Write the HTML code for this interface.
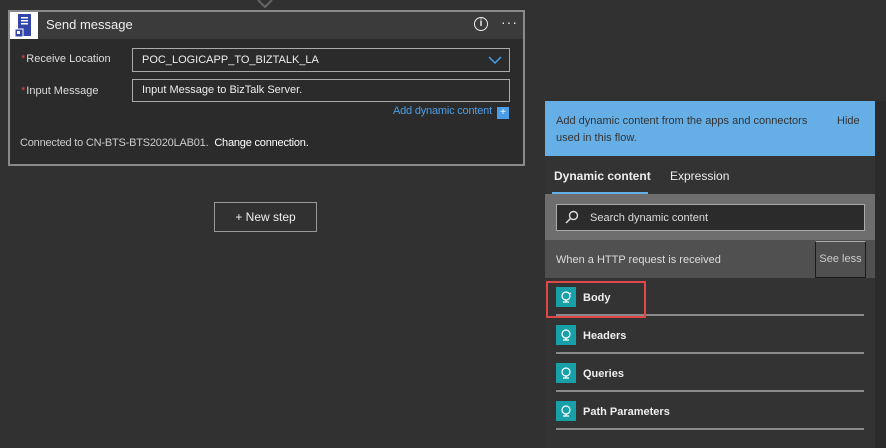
<!DOCTYPE html>
<html><head><style>
*{margin:0;padding:0;box-sizing:border-box}
body{width:886px;height:448px;background:#313131;font-family:"Liberation Sans",sans-serif;position:relative;overflow:hidden;color:#ddd}
.a{position:absolute}
.card{left:8px;top:10px;width:517px;height:156px;border:2px solid #8a8a8a;background:#2b2b2b}
.hdr{left:0;top:0;width:513px;height:27px;background:#3b3b3b}
.lbl{font-size:11px;color:#ddd}
.lbl b{color:#e04040;font-weight:normal;margin-right:1px}
.inp{border:1px solid #aaa;background:#2b2b2b;font-size:11px;color:#eee;padding-left:9px}
.item{left:556px;width:308px;height:38px;border-bottom:2px solid #8a8a8a}
.ic{position:absolute;left:0;top:9px;width:20px;height:20px;background:#17a0a8}
.it{position:absolute;left:27px;top:14px;font-size:11px;font-weight:bold;color:#eee}
</style></head><body>
<svg class="a" style="left:256px;top:0" width="18" height="10"><path d="M2 0 L9 7 L16 0" stroke="#666" stroke-width="2" fill="none"/></svg>
<div class="a card">
 <div class="a hdr"></div>
 <div class="a" style="left:0;top:0;width:28px;height:27px;background:#fff"></div>
 <svg class="a" style="left:4px;top:1px" width="22" height="25" viewBox="0 0 22 25"><rect x="4" y="1" width="13" height="22" fill="#3346a8"/><rect x="7" y="4" width="7" height="1.5" fill="#fff"/><rect x="7" y="7" width="7" height="1.5" fill="#fff"/><rect x="7" y="10" width="7" height="1.5" fill="#fff"/><rect x="1" y="16" width="8" height="8" fill="#3346a8" stroke="#fff"/><rect x="3" y="18" width="3" height="3" fill="#fff"/></svg>
 <div class="a" style="left:36px;top:5px;font-size:13px;color:#eee">Send message</div>
 <div class="a" style="left:464px;top:5px;width:14px;height:14px;border:1.5px solid #eee;border-radius:50%;font-size:10px;text-align:center;line-height:11px;color:#eee;font-weight:bold">i</div>
 <div class="a" style="left:491px;top:2px;font-size:14px;color:#eee;letter-spacing:1px">···</div>
 <div class="a lbl" style="left:11px;top:41px"><b>*</b>Receive Location</div>
 <div class="a inp" style="left:122px;top:36px;width:378px;height:24px;line-height:22px">POC_LOGICAPP_TO_BIZTALK_LA</div>
 <svg class="a" style="left:478px;top:44px" width="14" height="9"><path d="M1 1 L7 7 L13 1" stroke="#4a9ee8" stroke-width="1.5" fill="none"/></svg>
 <div class="a lbl" style="left:11px;top:73px"><b>*</b>Input Message</div>
 <div class="a inp" style="left:122px;top:67px;width:378px;height:23px;line-height:21px">Input Message to BizTalk Server.</div>
 <div class="a" style="left:383px;top:93px;font-size:11px;color:#4a9ee8;letter-spacing:-0.2px">Add dynamic content</div>
 <div class="a" style="left:487px;top:95px;width:12px;height:12px;background:#4a9ee8;color:#fff;font-size:10px;text-align:center;line-height:11px">+</div>
 <div class="a" style="left:10px;top:125px;font-size:11px;color:#ccc;letter-spacing:-0.2px">Connected to CN-BTS-BTS2020LAB01. <span style="color:#fff;margin-left:3px">Change connection.</span></div>
</div>
<div class="a" style="left:214px;top:202px;width:103px;height:30px;border:1px solid #999;font-size:12px;color:#eee;text-align:center;line-height:28px">+ New step</div>

<div class="a" style="left:545px;top:101px;width:330px;height:347px;background:#333"></div>
<div class="a" style="left:875px;top:101px;width:11px;height:347px;background:#2b2b2b"></div>
<div class="a" style="left:545px;top:101px;width:330px;height:55px;background:#66afe6"></div>
<div class="a" style="left:556px;top:113px;font-size:11px;color:#333;line-height:17px;width:260px">Add dynamic content from the apps and connectors used in this flow.</div>
<div class="a" style="left:837px;top:115px;font-size:11px;color:#333">Hide</div>
<div class="a" style="left:554px;top:169px;font-size:12px;font-weight:bold;color:#eee">Dynamic content</div>
<div class="a" style="left:670px;top:169px;font-size:12px;color:#eee">Expression</div>
<div class="a" style="left:552px;top:192px;width:96px;height:2px;background:#66afe6"></div>
<div class="a" style="left:545px;top:194px;width:330px;height:46px;background:#6e6e6e"></div>
<div class="a" style="left:556px;top:204px;width:309px;height:27px;background:#2b2b2b;border:1px solid #aaa"></div>
<svg class="a" style="left:565px;top:210px" width="14" height="14"><circle cx="8.5" cy="5.5" r="4" stroke="#ddd" stroke-width="1.4" fill="none"/><path d="M5.5 8.5 L1 13" stroke="#ddd" stroke-width="1.5"/></svg>
<div class="a" style="left:590px;top:212px;font-size:11px;color:#ddd">Search dynamic content</div>
<div class="a" style="left:545px;top:240px;width:330px;height:38px;background:#505050"></div>
<div class="a" style="left:556px;top:254px;font-size:11px;color:#ddd">When a HTTP request is received</div>
<div class="a" style="left:815px;top:241px;width:51px;height:37px;border:1px solid #1a1a1a;border-top-color:#aaa;font-size:11px;color:#ccc;text-align:center;line-height:35px">See less</div>

<div class="a item" style="top:278px"><div class="ic"><svg width="20" height="20"><circle cx="10" cy="9" r="4" fill="none" stroke="#fff" stroke-width="1.2"/><path d="M7 15h6M10 13v2M13 7l2 -1" stroke="#fff" stroke-width="1.2"/></svg></div><div class="it">Body</div></div>
<div class="a item" style="top:316px"><div class="ic"><svg width="20" height="20"><circle cx="10" cy="9" r="4" fill="none" stroke="#fff" stroke-width="1.2"/><path d="M7 15h6M10 13v2" stroke="#fff" stroke-width="1.2"/></svg></div><div class="it">Headers</div></div>
<div class="a item" style="top:354px"><div class="ic"><svg width="20" height="20"><circle cx="10" cy="9" r="4" fill="none" stroke="#fff" stroke-width="1.2"/><path d="M7 15h6M10 13v2" stroke="#fff" stroke-width="1.2"/></svg></div><div class="it">Queries</div></div>
<div class="a item" style="top:392px"><div class="ic"><svg width="20" height="20"><circle cx="10" cy="9" r="4" fill="none" stroke="#fff" stroke-width="1.2"/><path d="M7 15h6M10 13v2" stroke="#fff" stroke-width="1.2"/></svg></div><div class="it">Path Parameters</div></div>
<div class="a" style="left:546px;top:281px;width:100px;height:37px;border:2px solid #e04848"></div>
</body></html>
